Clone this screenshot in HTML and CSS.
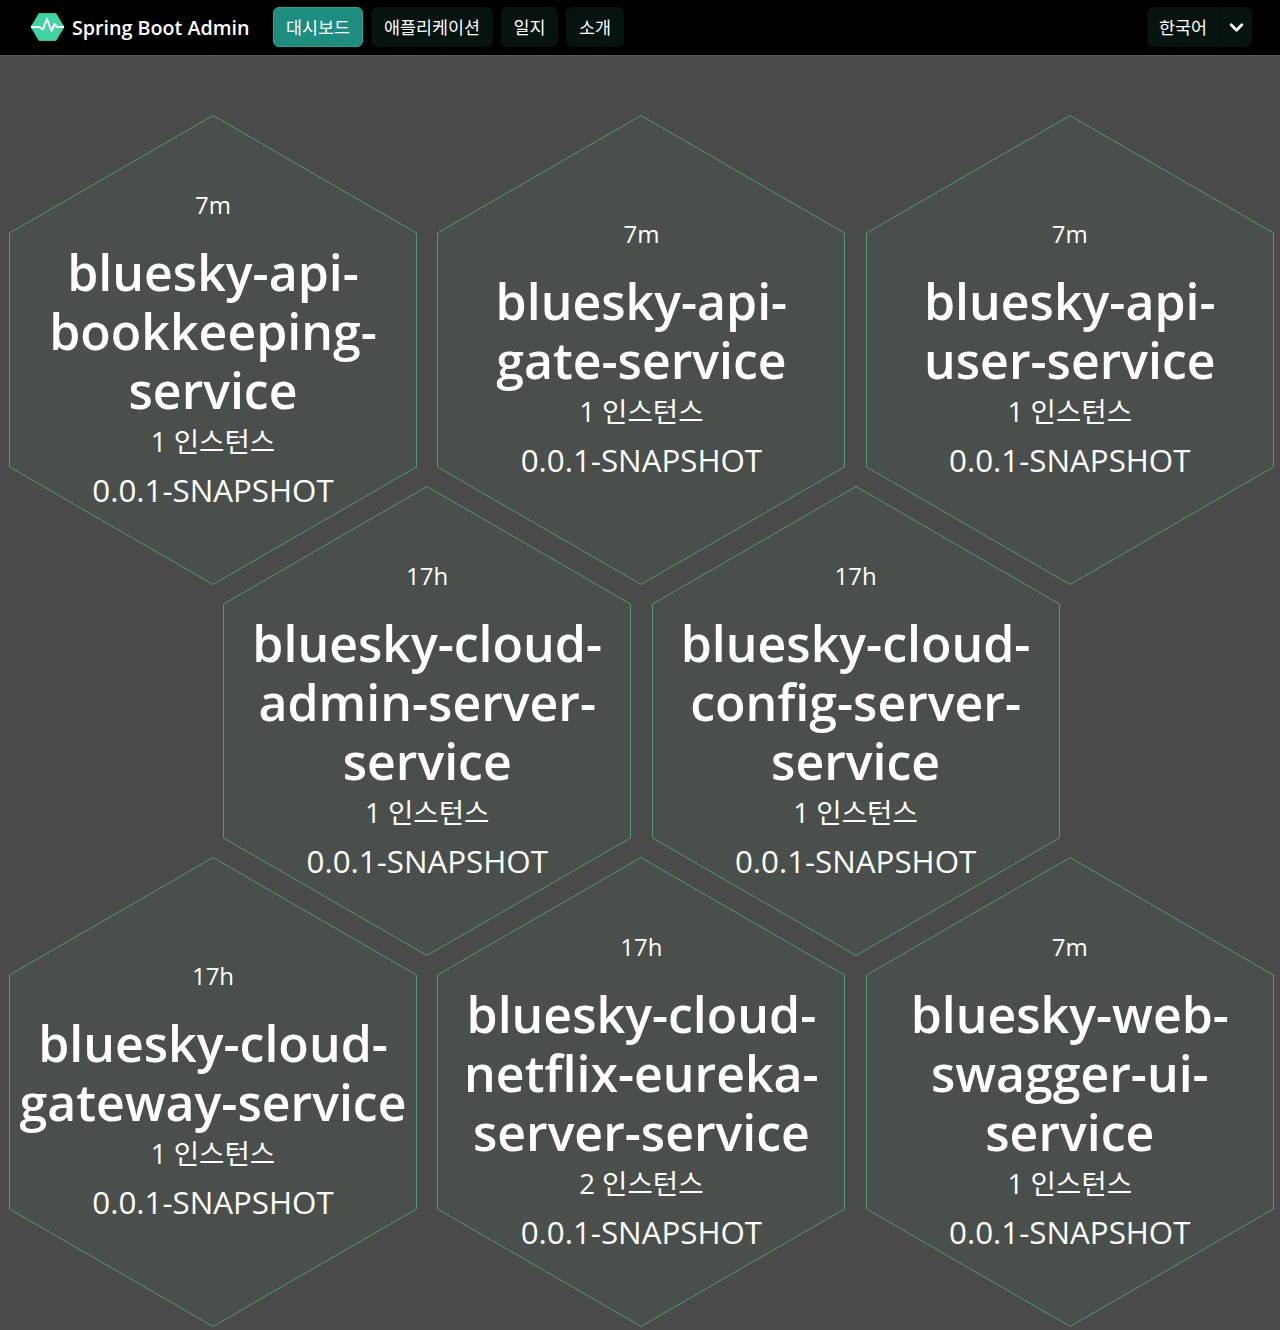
FILE: index.html
```html
<!DOCTYPE html>
<html lang="ko">
<head>
<meta charset="utf-8">
<title>Spring Boot Admin</title>
<link rel="stylesheet" href="styles.css">
</head>
<body>
<nav class="navbar">
  <a class="brand">
    <svg class="logo" viewBox="0 0 33 28"><polygon points="8,0.5 25,0.5 33,14 25,27.5 8,27.5 0,14" fill="#42d3a5" stroke="#42d3a5" stroke-width="0.8" stroke-linejoin="round"/><path d="M0 14H8.5L12 16.5L16 6L20.5 18L23.5 11L26 14H33" fill="none" stroke="#fff" stroke-width="2" stroke-linejoin="round"/></svg>
    <span>Spring Boot Admin</span>
  </a>
  <a class="nav-btn active btn-dash">대시보드</a>
  <a class="nav-btn btn-apps">애플리케이션</a>
  <a class="nav-btn btn-log">일지</a>
  <a class="nav-btn btn-about">소개</a>
  <div class="lang">
    <span class="lang-label">한국어</span>
    <span class="lang-arrow"><svg viewBox="0 0 14 10" class="chev"><path d="M2 2.5L7 7.5L12 2.5" fill="none" stroke="#fff" stroke-width="2.6" stroke-linecap="round" stroke-linejoin="round"/></svg></span>
  </div>
</nav>
<main class="grid">
  <div class="row">
    <div class="hex"><svg class="hex-bg" viewBox="0 0 408 470"><polygon points="204,0.5 407.5,118 407.5,352 204,469.5 0.5,352 0.5,118"/></svg><div class="t">7m</div><div class="name">bluesky-api-bookkeeping-service</div><div class="inst">1 인스턴스</div><div class="ver">0.0.1-SNAPSHOT</div></div>
    <div class="hex"><svg class="hex-bg" viewBox="0 0 408 470"><polygon points="204,0.5 407.5,118 407.5,352 204,469.5 0.5,352 0.5,118"/></svg><div class="t">7m</div><div class="name">bluesky-api-gate-service</div><div class="inst">1 인스턴스</div><div class="ver">0.0.1-SNAPSHOT</div></div>
    <div class="hex"><svg class="hex-bg" viewBox="0 0 408 470"><polygon points="204,0.5 407.5,118 407.5,352 204,469.5 0.5,352 0.5,118"/></svg><div class="t">7m</div><div class="name">bluesky-api-user-service</div><div class="inst">1 인스턴스</div><div class="ver">0.0.1-SNAPSHOT</div></div>
  </div>
  <div class="row">
    <div class="hex"><svg class="hex-bg" viewBox="0 0 408 470"><polygon points="204,0.5 407.5,118 407.5,352 204,469.5 0.5,352 0.5,118"/></svg><div class="t">17h</div><div class="name">bluesky-cloud-admin-server-service</div><div class="inst">1 인스턴스</div><div class="ver">0.0.1-SNAPSHOT</div></div>
    <div class="hex"><svg class="hex-bg" viewBox="0 0 408 470"><polygon points="204,0.5 407.5,118 407.5,352 204,469.5 0.5,352 0.5,118"/></svg><div class="t">17h</div><div class="name">bluesky-cloud-config-server-service</div><div class="inst">1 인스턴스</div><div class="ver">0.0.1-SNAPSHOT</div></div>
  </div>
  <div class="row">
    <div class="hex"><svg class="hex-bg" viewBox="0 0 408 470"><polygon points="204,0.5 407.5,118 407.5,352 204,469.5 0.5,352 0.5,118"/></svg><div class="t">17h</div><div class="name">bluesky-cloud-gateway-service</div><div class="inst">1 인스턴스</div><div class="ver">0.0.1-SNAPSHOT</div></div>
    <div class="hex"><svg class="hex-bg" viewBox="0 0 408 470"><polygon points="204,0.5 407.5,118 407.5,352 204,469.5 0.5,352 0.5,118"/></svg><div class="t">17h</div><div class="name">bluesky-cloud-netflix-eureka-server-service</div><div class="inst">2 인스턴스</div><div class="ver">0.0.1-SNAPSHOT</div></div>
    <div class="hex"><svg class="hex-bg" viewBox="0 0 408 470"><polygon points="204,0.5 407.5,118 407.5,352 204,469.5 0.5,352 0.5,118"/></svg><div class="t">7m</div><div class="name">bluesky-web-swagger-ui-service</div><div class="inst">1 인스턴스</div><div class="ver">0.0.1-SNAPSHOT</div></div>
  </div>
</main>
</body>
</html>
```
FILE: styles.css
```css
* { box-sizing: border-box; }
html, body { margin: 0; height: 100%; }
body {
  background: #4a4a4a;
  color: #fff;
  font-family: "Open Sans", "Noto Sans CJK KR", sans-serif;
  overflow: hidden;
}
.navbar {
  display: flex;
  align-items: center;
  height: 56px;
  background: #000;
  border-bottom: 1px solid #5a5a5a;
  padding: 0 28px 1px 31px;
}
.brand { display: flex; align-items: center; gap: 8px; margin-right: 23.5px; font-size: 19.7px; font-weight: 600; }
.logo { width: 33px; height: 28px; }
.nav-btn {
  display: flex;
  align-items: center;
  justify-content: center;
  height: 40px;
  margin-right: 8px;
  padding-bottom: 2px;
  background: #06130f;
  border-radius: 6px;
  font-size: 17.4px;
  font-family: "Noto Sans CJK KR", sans-serif;
}
.nav-btn.active { background: #1e8d80; border: 1px solid #2aa392; }
.btn-dash { width: 90px; }
.btn-apps { width: 122px; }
.btn-log { width: 57px; }
.btn-about { width: 58px; }
.lang {
  margin-left: auto;
  display: flex;
  height: 40px;
  width: 105px;
  background: #06130f;
  border-radius: 6px;
  font-size: 17.4px;
  font-family: "Noto Sans CJK KR", sans-serif;
}
.lang-label { width: 73px; padding-bottom: 2px; display: flex; align-items: center; justify-content: center; border-right: 1px solid #000; }
.lang-arrow { flex: 1; display: flex; align-items: center; justify-content: center; }
.chev { width: 15px; height: 11px; }
.grid { padding: 59px 0 0 2.8px; }
.row { display: flex; justify-content: center; gap: 20.4px; }
.row + .row { margin-top: -99px; }
.hex {
  position: relative;
  width: 408px;
  height: 470px;
  flex: none;
  display: flex;
  flex-direction: column;
  align-items: center;
  justify-content: center;
  text-align: center;
}
.hex-bg { position: absolute; inset: 0; width: 100%; height: 100%; }
.hex-bg polygon { fill: #4a4f4b; stroke: #4f9a70; stroke-width: 1; }
.hex > div { position: relative; }
.t { font-size: 24px; line-height: 36px; }
.name { font-size: 50px; font-weight: 600; line-height: 59px; margin-top: 20px; width: 390px; }
.inst { font-size: 27.6px; line-height: 36px; margin-top: 3px; }
.ver { font-size: 31.3px; line-height: 42px; margin-top: 10px; margin-bottom: 3px; }
```
